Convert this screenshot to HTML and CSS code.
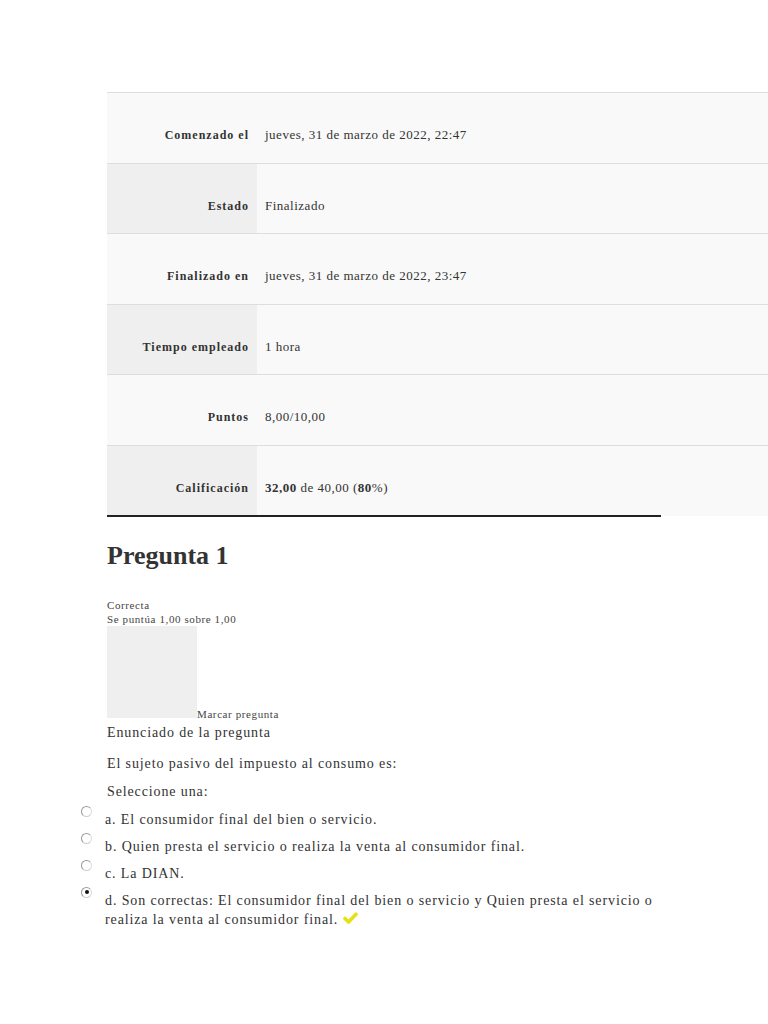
FILE: index.html
```html
<!DOCTYPE html>
<html lang="es">
<head>
<meta charset="utf-8">
<title>Resumen del intento</title>
<link rel="stylesheet" href="styles.css">
</head>
<body>
<div class="page">
  <table class="summary">
    <tr class="odd"><th>Comenzado el</th><td>jueves, 31 de marzo de 2022, 22:47</td></tr>
    <tr class="even"><th>Estado</th><td>Finalizado</td></tr>
    <tr class="odd"><th>Finalizado en</th><td>jueves, 31 de marzo de 2022, 23:47</td></tr>
    <tr class="even"><th>Tiempo empleado</th><td>1 hora</td></tr>
    <tr class="odd"><th>Puntos</th><td>8,00/10,00</td></tr>
    <tr class="even last"><th>Calificación</th><td><b>32,00</b> de 40,00 (<b>80</b>%)</td></tr>
  </table>
  <div class="rule"></div>

  <h2 class="qtitle">Pregunta 1</h2>
  <div class="qinfo">
    <div class="state">Correcta</div>
    <div class="grade">Se puntúa 1,00 sobre 1,00</div>
    <div class="flag"><span class="flagbox"></span>Marcar pregunta</div>
  </div>
  <div class="qtext">
    <div class="enun">Enunciado de la pregunta</div>
    <p class="stem">El sujeto pasivo del impuesto al consumo es:</p>
    <p class="prompt">Seleccione una:</p>
    <div class="answers">
      <div class="opt"><span class="radio"></span><span class="label">a. El consumidor final del bien o servicio.</span></div>
      <div class="opt"><span class="radio"></span><span class="label">b. Quien presta el servicio o realiza la venta al consumidor final.</span></div>
      <div class="opt"><span class="radio"></span><span class="label">c. La DIAN.</span></div>
      <div class="opt"><span class="radio checked"></span><span class="label">d. Son correctas: El consumidor final del bien o servicio y Quien presta el servicio o realiza la venta al consumidor final. <svg class="tick" width="15" height="12" viewBox="0 0 15 12"><path d="M2 6.5 L5.5 10 L13 2.2" fill="none" stroke="#e6e014" stroke-width="3.6" stroke-linecap="round" stroke-linejoin="round"/></svg></span></div>
    </div>
  </div>
</div>
</body>
</html>
```

FILE: styles.css
```css
html { overflow-x: hidden; }
body {
  margin: 0;
  background: #fff;
  color: #333;
  font-family: "Liberation Serif", "Times New Roman", serif;
}
.page {
  padding: 92px 0 40px 107px;
}
.summary {
  border-collapse: collapse;
  width: 680px;
  font-size: 13px;
  letter-spacing: 0.5px;
}
.summary tr {
  height: 70.6px;
}
.summary th, .summary td {
  border-top: 1px solid #dedede;
  padding: 33px 8px 18px 8px;
  vertical-align: top;
  line-height: 18px;
  background: #f9f9f9;
}
.summary th {
  width: 134px;
  text-align: right;
  font-weight: bold;
  font-size: 12px;
  letter-spacing: 1px;
}
.summary tr.even th {
  background: #efefef;
}
.rule {
  width: 554px;
  height: 2px;
  background: #222;
  margin-top: -1px;
}
.qtitle {
  margin: 23px 0 0 0;
  font-size: 26px;
  line-height: 32px;
  font-weight: bold;
  color: #333;
}
.qinfo {
  margin-top: 27px;
  font-size: 11px;
  line-height: 13.5px;
  color: #444;
  letter-spacing: 0.6px;
}
.flag {
  font-size: 11px;
}
.flagbox {
  display: inline-block;
  width: 90px;
  height: 92px;
  background: #efefef;
  vertical-align: baseline;
}
.qtext {
  font-size: 14px;
  letter-spacing: 0.88px;
}
.enun {
  margin-top: 2px;
  line-height: 18px;
}
.stem {
  margin: 13px 0 0 0;
  line-height: 18px;
}
.prompt {
  margin: 10px 0 0 0;
  line-height: 18px;
}
.answers {
  margin-left: -28px;
  margin-top: 2px;
}
.opt {
  display: flex;
  align-items: flex-start;
  min-height: 27px;
}
.radio {
  flex: none;
  width: 9px;
  height: 9px;
  border-radius: 50%;
  border: 1px solid #999;
  border-right-color: #ddd;
  border-bottom-color: #ccc;
  margin: 3px 13px 0 2px;
  position: relative;
  box-sizing: content-box;
}
.radio.checked::after {
  content: "";
  position: absolute;
  left: 2.5px;
  top: 2.5px;
  width: 4px;
  height: 4px;
  border-radius: 50%;
  background: #111;
}
.label {
  display: block;
  padding-top: 7px;
  line-height: 19px;
  max-width: 560px;
}
.tick {
  vertical-align: 0px;
}
```
